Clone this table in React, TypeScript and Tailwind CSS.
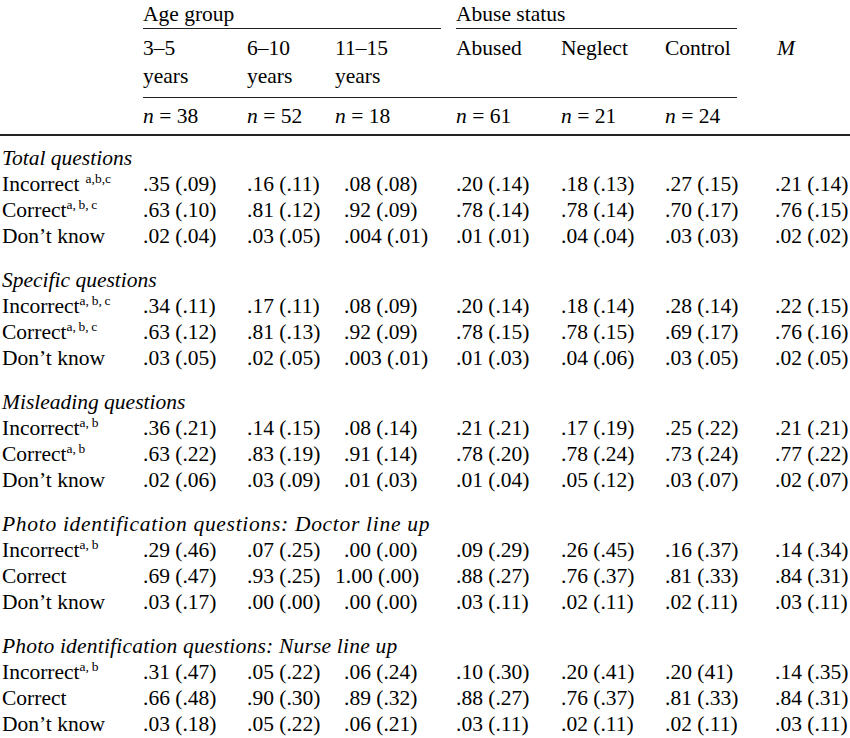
import React from "react";

const grid = "grid grid-cols-[143px_104px_88px_106px_15px_105px_104px_72px_40px_1fr]";

type Row = { label: string; sup?: string; supGap?: boolean; values: string[] };
type Section = { title: string; tracking?: string; rows: Row[] };

const sections: Section[] = [
  {
    title: "Total questions",
    rows: [
      { label: "Incorrect", sup: "a,b,c", supGap: true, values: [".35 (.09)", ".16 (.11)", ".08 (.08)", ".20 (.14)", ".18 (.13)", ".27 (.15)", ".21 (.14)"] },
      { label: "Correct", sup: "a,\u2009b,\u2009c", values: [".63 (.10)", ".81 (.12)", ".92 (.09)", ".78 (.14)", ".78 (.14)", ".70 (.17)", ".76 (.15)"] },
      { label: "Don\u2019t know", values: [".02 (.04)", ".03 (.05)", ".004 (.01)", ".01 (.01)", ".04 (.04)", ".03 (.03)", ".02 (.02)"] },
    ],
  },
  {
    title: "Specific questions",
    rows: [
      { label: "Incorrect", sup: "a,\u2009b,\u2009c", values: [".34 (.11)", ".17 (.11)", ".08 (.09)", ".20 (.14)", ".18 (.14)", ".28 (.14)", ".22 (.15)"] },
      { label: "Correct", sup: "a,\u2009b,\u2009c", values: [".63 (.12)", ".81 (.13)", ".92 (.09)", ".78 (.15)", ".78 (.15)", ".69 (.17)", ".76 (.16)"] },
      { label: "Don\u2019t know", values: [".03 (.05)", ".02 (.05)", ".003 (.01)", ".01 (.03)", ".04 (.06)", ".03 (.05)", ".02 (.05)"] },
    ],
  },
  {
    title: "Misleading questions",
    rows: [
      { label: "Incorrect", sup: "a,\u2009b", values: [".36 (.21)", ".14 (.15)", ".08 (.14)", ".21 (.21)", ".17 (.19)", ".25 (.22)", ".21 (.21)"] },
      { label: "Correct", sup: "a,\u2009b", values: [".63 (.22)", ".83 (.19)", ".91 (.14)", ".78 (.20)", ".78 (.24)", ".73 (.24)", ".77 (.22)"] },
      { label: "Don\u2019t know", values: [".02 (.06)", ".03 (.09)", ".01 (.03)", ".01 (.04)", ".05 (.12)", ".03 (.07)", ".02 (.07)"] },
    ],
  },
  {
    title: "Photo identification questions: Doctor line up",
    tracking: "tracking-[0.7px]",
    rows: [
      { label: "Incorrect", sup: "a,\u2009b", values: [".29 (.46)", ".07 (.25)", ".00 (.00)", ".09 (.29)", ".26 (.45)", ".16 (.37)", ".14 (.34)"] },
      { label: "Correct", values: [".69 (.47)", ".93 (.25)", "1.00 (.00)", ".88 (.27)", ".76 (.37)", ".81 (.33)", ".84 (.31)"] },
      { label: "Don\u2019t know", values: [".03 (.17)", ".00 (.00)", ".00 (.00)", ".03 (.11)", ".02 (.11)", ".02 (.11)", ".03 (.11)"] },
    ],
  },
  {
    title: "Photo identification questions: Nurse line up",
    tracking: "tracking-[0.2px]",
    rows: [
      { label: "Incorrect", sup: "a,\u2009b", values: [".31 (.47)", ".05 (.22)", ".06 (.24)", ".10 (.30)", ".20 (.41)", ".20 (41)", ".14 (.35)"] },
      { label: "Correct", values: [".66 (.48)", ".90 (.30)", ".89 (.32)", ".88 (.27)", ".76 (.37)", ".81 (.33)", ".84 (.31)"] },
      { label: "Don\u2019t know", values: [".03 (.18)", ".05 (.22)", ".06 (.21)", ".03 (.11)", ".02 (.11)", ".02 (.11)", ".03 (.11)"] },
    ],
  },
];

function N({ v }: { v: string }) {
  return (
    <span>
      <i>n</i> = {v}
    </span>
  );
}

function DataRow({ row }: { row: Row }) {
  const [a, b, c, d, e, f, m] = row.values;
  return (
    <div className={`${grid} h-[26px] leading-[26px] whitespace-nowrap`}>
      <div className="pl-[2px]">
        {row.label}
        {row.sup && (
          <sup className={`text-[13.5px] top-[-8px] ${row.supGap ? "ml-[6px]" : ""}`}>{row.sup}</sup>
        )}
      </div>
      <div>{a}</div>
      <div>{b}</div>
      <div className={c.startsWith(".") ? "pl-[9px]" : ""}>{c}</div>
      <div />
      <div>{d}</div>
      <div>{e}</div>
      <div>{f}</div>
      <div />
      <div className="-ml-[2px]">{m}</div>
    </div>
  );
}

export default function App() {
  return (
    <div className="w-[850px] h-[738px] overflow-hidden bg-white text-black text-[21.5px] font-['Liberation_Serif',serif]">
      {/* header */}
      <div className={`${grid} h-[29px] leading-[26px]`}>
        <div className="col-start-2 col-span-3 border-b border-[#222] pt-[1px]">Age group</div>
        <div className="col-start-6 col-span-3 border-b border-[#222] pt-[1px]">Abuse status</div>
      </div>
      <div className={`${grid} h-[69px] leading-[28px]`}>
        <div />
        <div className="border-b border-[#222] pt-[5px]">3–5<br />years</div>
        <div className="border-b border-[#222] pt-[5px]">6–10<br />years</div>
        <div className="border-b border-[#222] pt-[5px]">11–15<br />years</div>
        <div className="border-b border-[#222]" />
        <div className="border-b border-[#222] pt-[5px]">Abused</div>
        <div className="border-b border-[#222] pt-[5px]">Neglect</div>
        <div className="border-b border-[#222] pt-[5px]">Control</div>
        <div />
        <div className="pt-[5px] italic">M</div>
      </div>
      <div className={`${grid} h-[38px] leading-[26px] pt-[5px] border-b-2 border-[#222] whitespace-nowrap`}>
        <div />
        <N v="38" />
        <N v="52" />
        <N v="18" />
        <div />
        <N v="61" />
        <N v="21" />
        <N v="24" />
      </div>

      {/* body */}
      <div className="flex flex-col gap-[18px] pt-[9px]">
        {sections.map((s) => (
          <div key={s.title}>
            <div className={`h-[26px] leading-[26px] pl-[2px] italic whitespace-nowrap ${s.tracking ?? ""}`}>{s.title}</div>
            {s.rows.map((r) => (
              <DataRow key={r.label} row={r} />
            ))}
          </div>
        ))}
      </div>
    </div>
  );
}
